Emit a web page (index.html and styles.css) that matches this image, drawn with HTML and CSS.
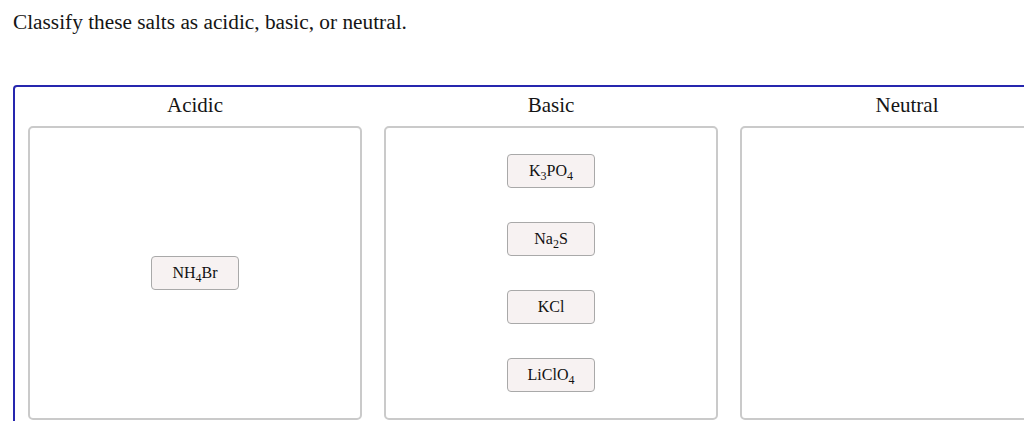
FILE: index.html
```html
<!DOCTYPE html>
<html>
<head>
<meta charset="utf-8">
<link rel="stylesheet" href="styles.css">
</head>
<body>
<p class="prompt">Classify these salts as acidic, basic, or neutral.</p>
<div class="board">
  <div class="col">
    <div class="col-title">Acidic</div>
    <div class="bin">
      <div class="chip"><span>NH<sub>4</sub>Br</span></div>
    </div>
  </div>
  <div class="col">
    <div class="col-title">Basic</div>
    <div class="bin">
      <div class="chip"><span>K<sub>3</sub>PO<sub>4</sub></span></div>
      <div class="chip"><span>Na<sub>2</sub>S</span></div>
      <div class="chip"><span>KCl</span></div>
      <div class="chip"><span>LiClO<sub>4</sub></span></div>
    </div>
  </div>
  <div class="col">
    <div class="col-title">Neutral</div>
    <div class="bin"></div>
  </div>
</div>
</body>
</html>
```
FILE: styles.css
```css
html, body {
  margin: 0;
  padding: 0;
  background: #ffffff;
  overflow: hidden;
}
body {
  font-family: "Liberation Serif", "Times New Roman", serif;
  color: #151515;
  width: 1024px;
  height: 421px;
}
.prompt {
  margin: 0;
  padding: 10px 0 0 13px;
  font-size: 21.3px;
  line-height: 24px;
}
.board {
  margin: 51px 0 0 13px;
  width: 1110px;
  border: 2px solid #2626ae;
  border-radius: 4px;
  padding: 0 14px 0 13px;
  display: flex;
  gap: 22px;
  height: 400px;
  box-sizing: border-box;
}
.col {
  width: 334px;
  display: flex;
  flex-direction: column;
}
.col-title {
  text-align: center;
  font-size: 21px;
  line-height: 26px;
  padding: 5px 0 8px 0;
}
.bin {
  height: 294px;
  border: 2px solid #cacaca;
  border-radius: 5px;
  box-sizing: border-box;
  display: flex;
  flex-direction: column;
  align-items: center;
  justify-content: center;
  gap: 34px;
}
.chip {
  width: 88px;
  height: 34px;
  box-sizing: border-box;
  border: 1px solid #a9a9a9;
  border-radius: 4px;
  background: #f7f2f2;
  display: flex;
  align-items: center;
  justify-content: center;
  font-size: 16px;
  color: #111;
}
.chip sub {
  font-size: 12px;
  vertical-align: -4px;
  line-height: 0;
}
```
